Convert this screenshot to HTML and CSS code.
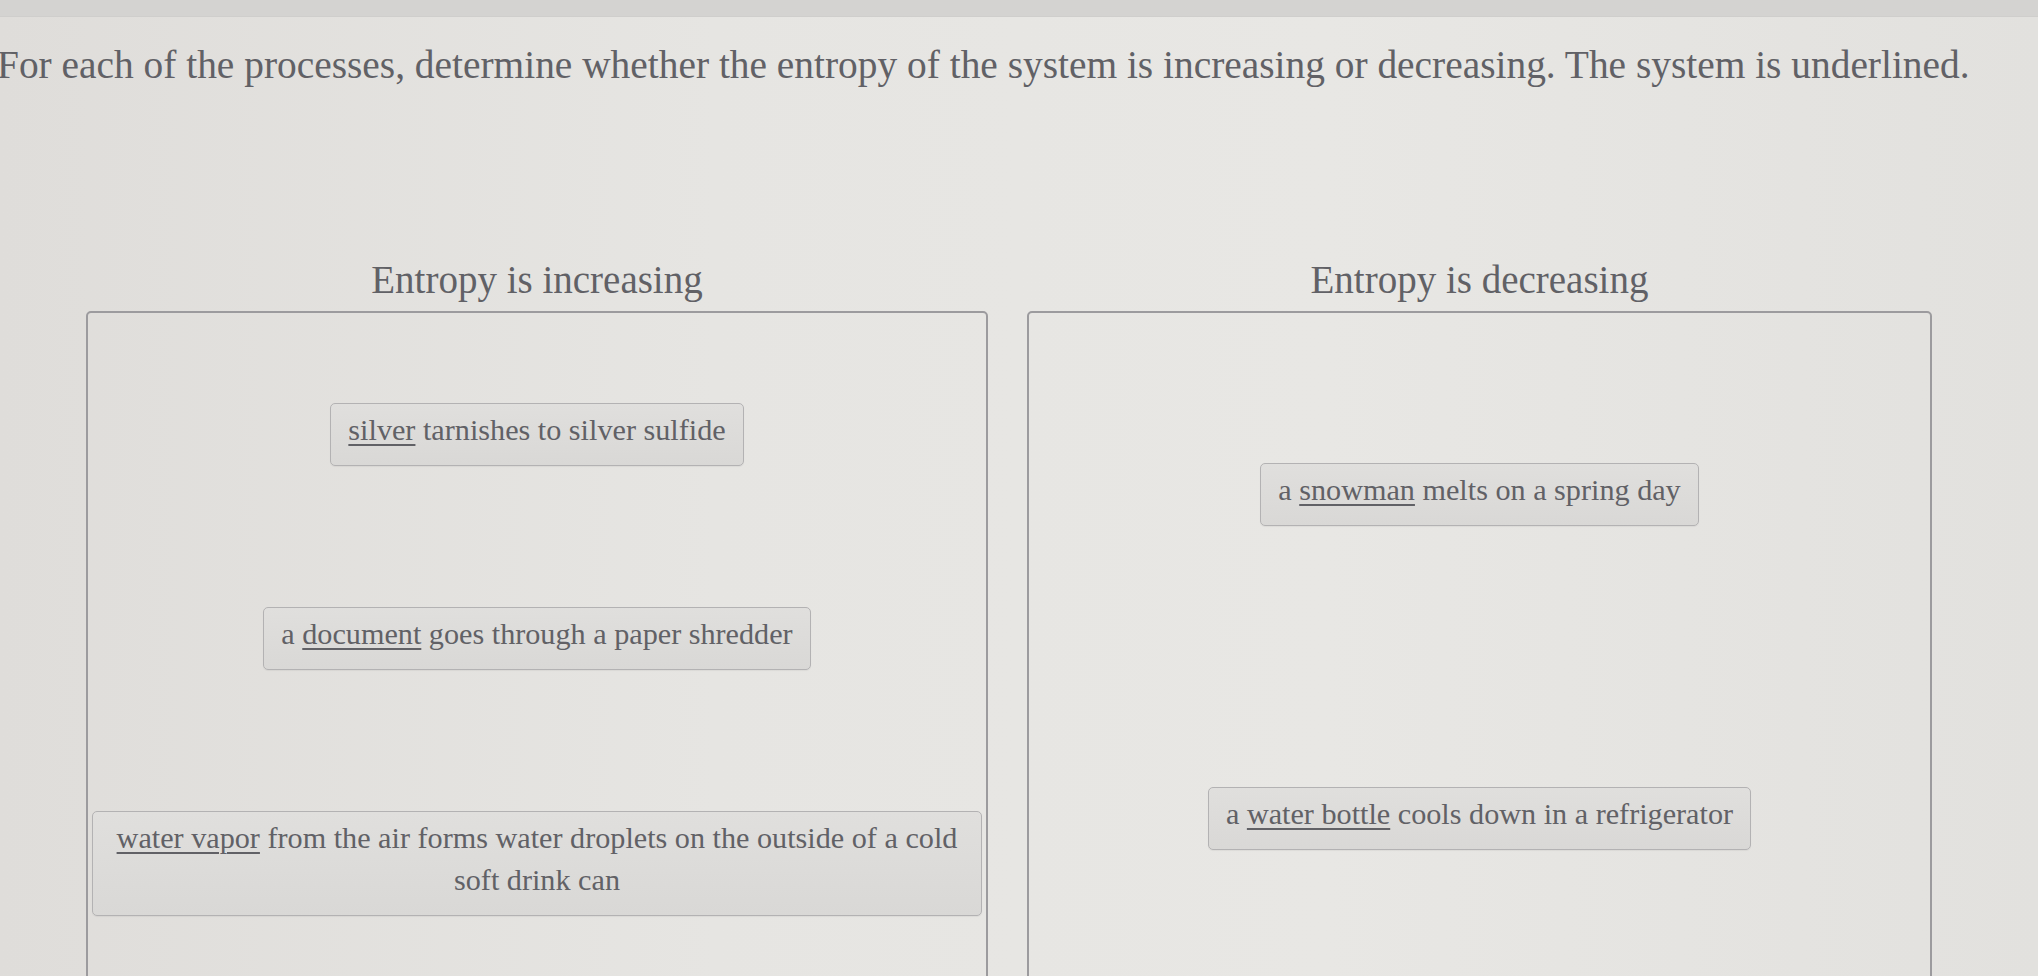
FILE: index.html
```html
<!DOCTYPE html>
<html lang="en">
<head>
    <meta charset="UTF-8">
    <meta name="viewport" content="width=device-width, initial-scale=1.0">
    <title>Entropy Sorting</title>
    <link rel="stylesheet" href="styles.css">
</head>
<body>
    <div class="topbar"></div>
    <p class="prompt">For each of the processes, determine whether the entropy of the system is increasing or decreasing. The system is underlined.</p>
    <div class="buckets">
        <div class="bucket">
            <div class="bucket-title">Entropy is increasing</div>
            <div class="drop-zone zone-left">
                <div class="chip"><u>silver</u> tarnishes to silver sulfide</div>
                <div class="chip">a <u>document</u> goes through a paper shredder</div>
                <div class="chip"><u>water vapor</u> from the air forms water droplets on the outside of a cold soft drink can</div>
            </div>
        </div>
        <div class="bucket">
            <div class="bucket-title">Entropy is decreasing</div>
            <div class="drop-zone zone-right">
                <div class="chip">a <u>snowman</u> melts on a spring day</div>
                <div class="chip">a <u>water bottle</u> cools down in a refrigerator</div>
            </div>
        </div>
    </div>
</body>
</html>
```

FILE: styles.css
```css
body { margin: 0; font-family: "Liberation Serif", "Times New Roman", serif; color: #616166; background: linear-gradient(90deg, #dfddda 0%, #e6e5e2 35%, #e8e7e4 65%, #e2e1de 100%); overflow: hidden; }
.topbar { height: 16px; background-color: #d4d3d1; border-bottom: 1px solid #cfcecc; }
.prompt { font-size: 39.4px; line-height: 46px; margin: 25px 0 0 -3px; white-space: nowrap; }
.buckets { display: grid; grid-template-columns: 902px 905px; column-gap: 39px; margin: 170px 0 0 86px; }
.bucket-title { font-size: 39px; line-height: 44px; text-align: center; margin-bottom: 9px; }
.drop-zone { display: flex; flex-direction: column; align-items: center; min-height: 700px; border: 2px solid #9c9b9e; border-radius: 5px; padding: 0 4px; }
.zone-left { padding-top: 90px; gap: 141px; }
.zone-right { padding-top: 150px; gap: 261px; }
.chip { font-size: 30.2px; line-height: 42px; text-align: center; padding: 5px 17px 14px; border: 1px solid #b3b2b3; border-radius: 5px; background: linear-gradient(180deg, #e0dfdd, #d9d8d6); box-shadow: 0 1px 1px rgba(0, 0, 0, 0.05); }
.chip u { text-decoration-thickness: 2px; text-underline-offset: 4px; }
```
